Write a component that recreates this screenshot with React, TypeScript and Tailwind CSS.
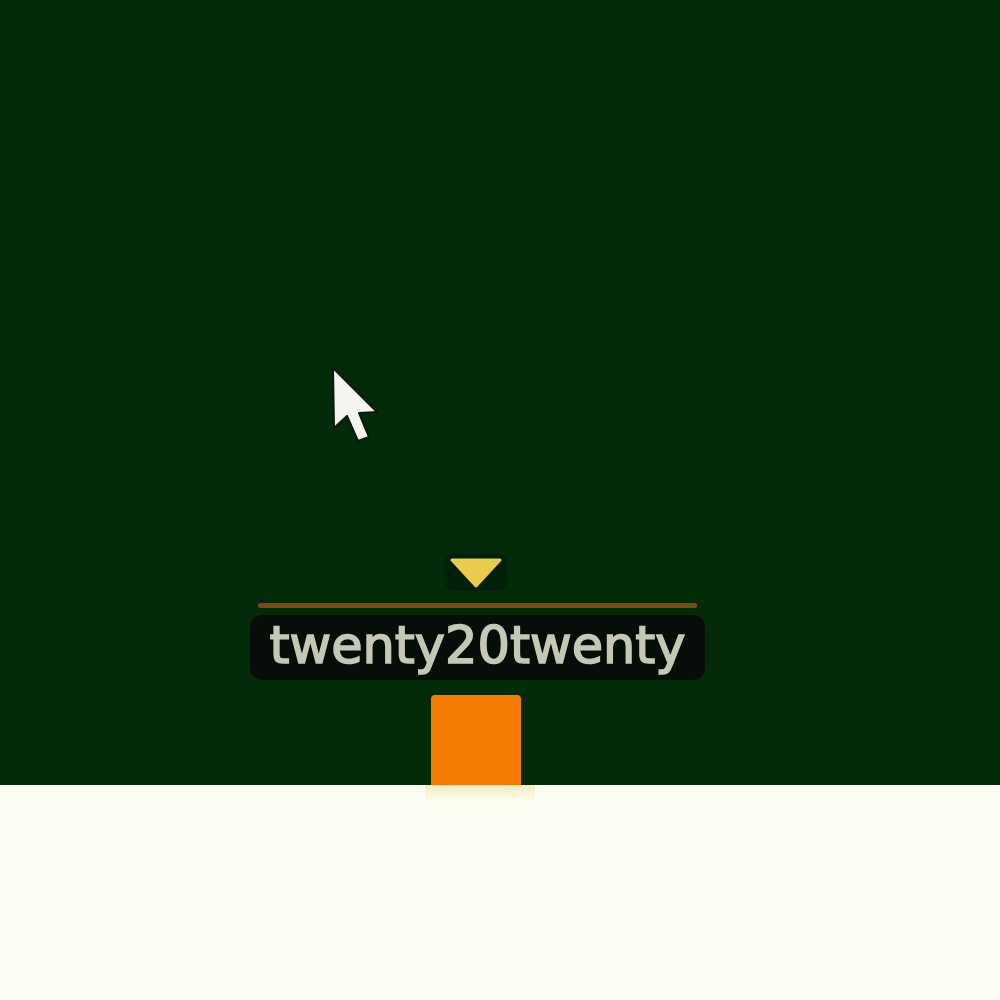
export default function App() {
  return (
    <div className="relative w-[1000px] h-[1000px] overflow-hidden bg-[#fdfef3]">
      <div className="h-[785px] bg-[#032a09] flex flex-col justify-end">
        <div className="ml-[250px] w-[455px] flex flex-col items-center">
          <div className="ml-[-3px] w-[62px] h-[38px] rounded-[10px] bg-[#02200a] flex items-center justify-center">
            <svg width="54" height="32" viewBox="0 0 54 32">
              <path d="M3 4 H51 L27 30 Z" fill="#e9cc4c" stroke="#e9cc4c" strokeWidth="3" strokeLinejoin="round" />
            </svg>
          </div>
          <div className="mt-[12px] w-[439px] h-[5px] rounded-full bg-[#7c4b12]" />
          <div className="mt-[7px] w-[455px] h-[65px] rounded-[12px] bg-[#070d08] flex items-center justify-center">
            <span
              className="text-[51px] leading-none text-[#c5c8b6] pb-[4px] [-webkit-text-stroke:1.6px_#c5c8b6]"
              style={{ fontFamily: '"DejaVu Sans", sans-serif' }}
            >
              twenty20twenty
            </span>
          </div>
          <div className="mt-[15px] ml-[-3px] w-[90px] h-[90px] rounded-t-[4px] bg-[#f57a02]" />
        </div>
      </div>
      <div className="ml-[425px] w-[110px] h-[18px] bg-gradient-to-b from-[#f1eec0] to-[#fdfef3]" />
      <svg className="absolute left-[331px] top-[366px]" width="50" height="80" viewBox="0 0 50 80">
        <path
          d="M2 2 L3 62 L16 50 L27 75 L38 71 L28 47 L46 46 Z"
          fill="#f4f4f0"
          stroke="#0a1a0c"
          strokeWidth="2"
          strokeLinejoin="round"
        />
      </svg>
    </div>
  );
}
